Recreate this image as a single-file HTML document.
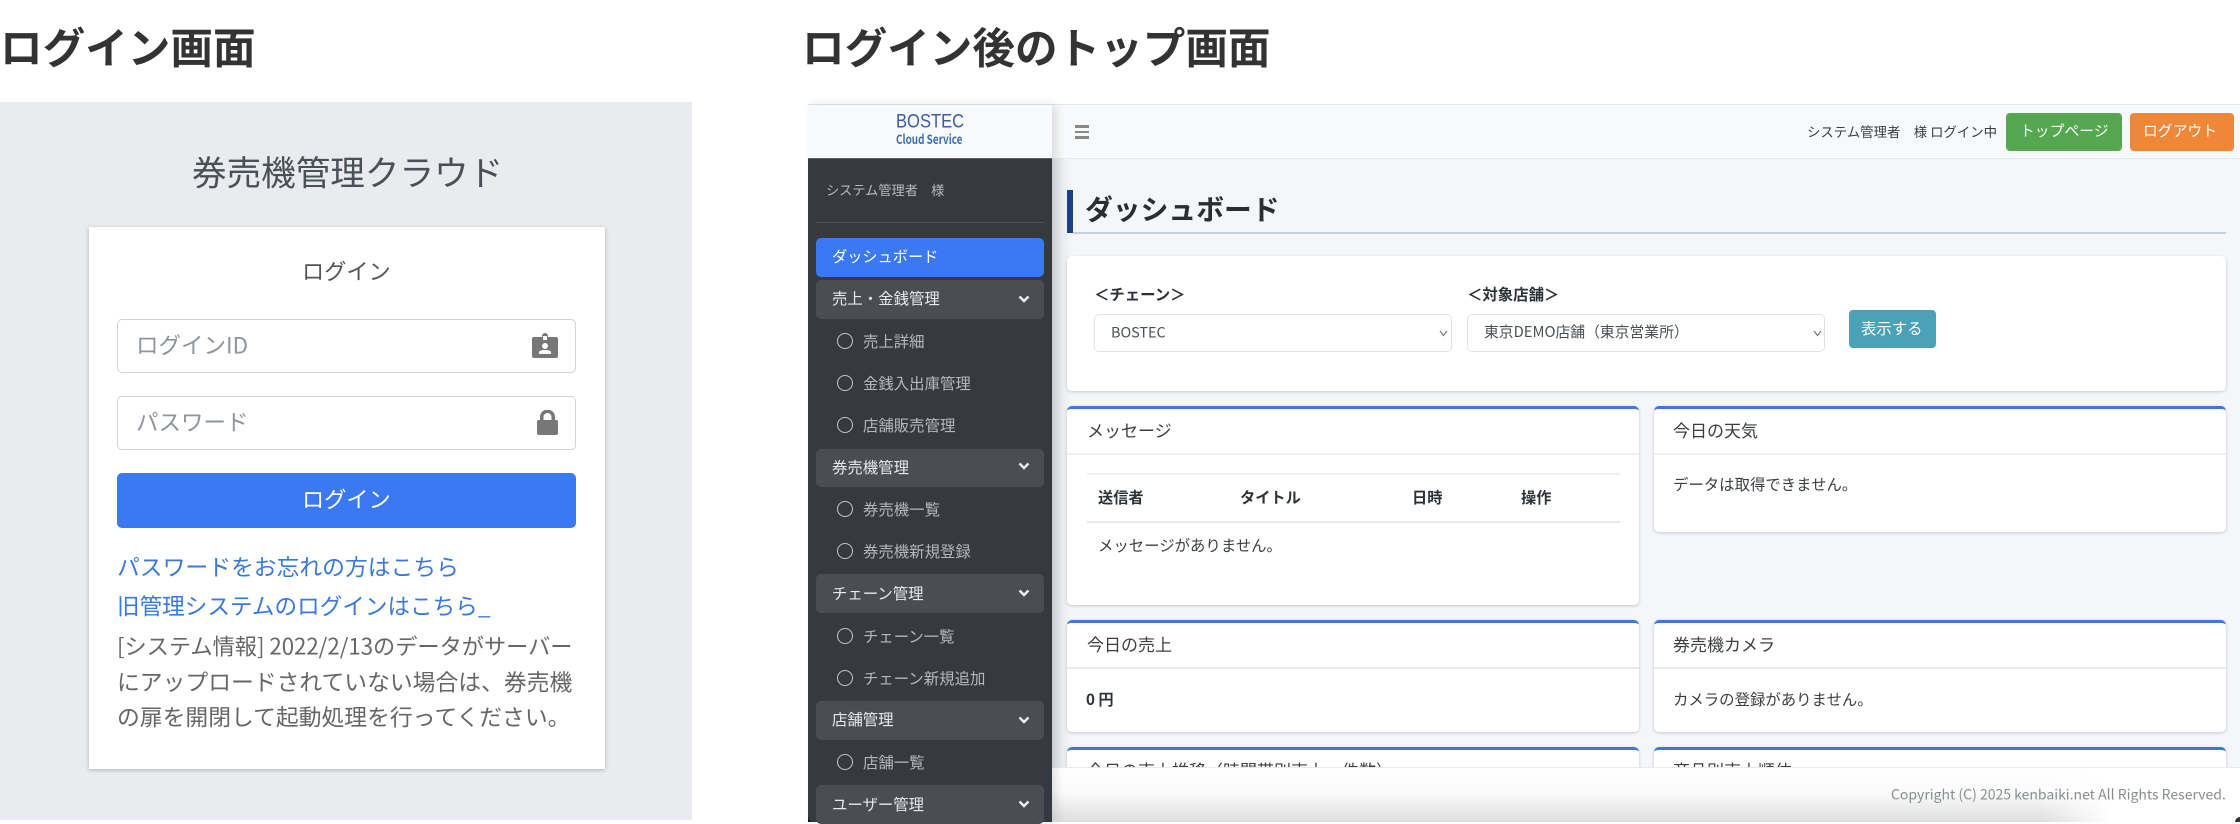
<!DOCTYPE html>
<html lang="ja">
<head>
<meta charset="utf-8">
<title>ログイン画面</title>
<style>
html,body{margin:0;padding:0;background:#fff;}
body{position:relative;width:2240px;height:822px;overflow:hidden;font-family:"Liberation Sans","Noto Sans CJK JP",sans-serif;}
.t{position:absolute;white-space:nowrap;transform:translateY(-50%);margin-top:-1px;line-height:1.2;font-family:"Noto Sans CJK JP",sans-serif;}
.b{position:absolute;box-sizing:border-box;}
.grp{position:absolute;left:816px;width:228px;height:39px;background:#4a4e54;border-radius:5px;}
.grpt{color:#e6e8ea;font-size:15.4px;left:832px;}
.sub{color:#b4b8bc;font-size:15.4px;left:863px;}
.c{position:absolute;left:837px;width:16px;height:16px;margin-top:-1px;box-sizing:border-box;border:1.6px solid #c4c7ca;border-radius:50%;transform:translateY(-50%);}
.chev{position:absolute;left:1018px;width:12px;height:8px;}
.card{position:absolute;background:#fff;border-radius:5px;box-shadow:0 1px 3px rgba(0,0,0,.2);box-sizing:border-box;border-top:3px solid #3f78dc;}
.ln{position:absolute;height:2px;background:#efefef;}
.dk{color:#3c3f42;font-size:15.4px;}
.hd{color:#3c3f42;font-size:17px;}
.th{color:#2e3236;font-size:15.2px;font-weight:700;}
</style>
</head>
<body>
<!-- Section titles -->
<div class="t" style="left:0;top:47px;font-size:42.6px;font-weight:700;color:#333;">ログイン画面</div>
<div class="t" style="left:802px;top:47px;font-size:42.6px;font-weight:700;color:#333;">ログイン後のトップ画面</div>

<!-- Login -->
<div class="b" style="left:0;top:102px;width:692px;height:718px;background:#e9ebef;"></div>
<div class="t" style="left:192px;top:172px;font-size:34.6px;color:#495057;">券売機管理クラウド</div>
<div class="b" style="left:89px;top:227px;width:516px;height:542px;background:#fff;box-shadow:0 1px 4px rgba(0,0,0,.25);"></div>
<div class="t" style="left:302px;top:272px;font-size:22.2px;color:#555;">ログイン</div>

<div class="b" style="left:117px;top:319px;width:459px;height:54px;background:#fff;border:1.5px solid #ced4da;border-radius:5px;"></div>
<div class="t" style="left:136px;top:346px;font-size:22.5px;color:#8f959b;">ログインID</div>
<svg style="position:absolute;left:532px;top:333px" width="26" height="25" viewBox="0 0 26 25"><path fill="#777" fill-rule="evenodd" d="M2 4h8V3a3 3 0 0 1 6 0v1h8a2 2 0 0 1 2 2v17a2 2 0 0 1-2 2H2a2 2 0 0 1-2-2V6a2 2 0 0 1 2-2zM11 3v4h4V3zM13 10a3 3 0 1 0 0 6 3 3 0 0 0 0-6zM7 21h12v-1.500c0-1.500-2-2.500-6-2.500s-6 1-6 2.500z"/></svg>

<div class="b" style="left:117px;top:396px;width:459px;height:54px;background:#fff;border:1.5px solid #ced4da;border-radius:5px;"></div>
<div class="t" style="left:136px;top:423px;font-size:22.5px;color:#8f959b;">パスワード</div>
<svg style="position:absolute;left:537px;top:410px" width="21" height="25" viewBox="0 0 21 25"><path fill="#777" d="M3 10V7a7.500 7.500 0 0 1 15 0v3h1a2 2 0 0 1 2 2v11a2 2 0 0 1-2 2H2a2 2 0 0 1-2-2V12a2 2 0 0 1 2-2zm3.500 0h8V7a4 4 0 0 0-8 0z"/></svg>

<div class="b" style="left:117px;top:473px;width:459px;height:55px;background:#3b79f3;border-radius:5px;"></div>
<div class="t" style="left:302px;top:500px;font-size:22.2px;color:#fff;">ログイン</div>

<div class="t" style="left:117px;top:567px;font-size:22.8px;color:#3a78dc;">パスワードをお忘れの方はこちら</div>
<div class="t" style="left:117px;top:606px;font-size:22.6px;color:#3a78dc;">旧管理システムのログインはこちら_</div>
<div class="t" style="left:117px;top:647px;font-size:22.2px;color:#666;">[システム情報] 2022/2/13のデータがサーバー</div>
<div class="t" style="left:117px;top:682px;font-size:22.8px;color:#666;">にアップロードされていない場合は、券売機</div>
<div class="t" style="left:117px;top:717px;font-size:22.8px;color:#666;">の扉を開閉して起動処理を行ってください。</div>

<!-- App screenshot -->
<div class="b" style="left:808px;top:104px;width:1432px;height:718px;background:#f4f6f9;border-top:1.5px solid #e3e4e6;"></div>

<!-- Content -->
<div class="b" style="left:1052px;top:105px;width:20px;height:662px;background:linear-gradient(90deg,#dfe1e4,#f4f6f9);"></div>
<div class="b" style="left:1052px;top:105px;width:1188px;height:54px;background:#f8f9fa;border-bottom:1.5px solid #e6e8ea;"></div>
<div class="b" style="left:1075px;top:125px;width:14px;height:2.5px;background:#888;"></div>
<div class="b" style="left:1075px;top:130.5px;width:14px;height:2.5px;background:#888;"></div>
<div class="b" style="left:1075px;top:136px;width:14px;height:2.5px;background:#888;"></div>
<div class="t" style="left:1807px;top:132px;font-size:13.4px;color:#3a3d40;">システム管理者　様 ログイン中</div>
<div class="b" style="left:2006px;top:113px;width:116px;height:38px;background:#55a84f;border-radius:4px;"></div>
<div class="t" style="left:2020px;top:132px;font-size:14.8px;color:#fff;">トップページ</div>
<div class="b" style="left:2130px;top:113px;width:104px;height:38px;background:#ee8737;border-radius:4px;"></div>
<div class="t" style="left:2143px;top:132px;font-size:14.8px;color:#fff;">ログアウト</div>

<div class="b" style="left:1067px;top:190px;width:6px;height:43px;background:#1b4285;"></div>
<div class="b" style="left:1073px;top:232px;width:1153px;height:2px;background:#c6cfdf;"></div>
<div class="t" style="left:1085px;top:210px;font-size:27.8px;font-weight:700;color:#2b2e31;">ダッシュボード</div>

<div class="b" style="left:1067px;top:256px;width:1159px;height:135px;background:#fff;border-radius:5px;box-shadow:0 1px 3px rgba(0,0,0,.18);"></div>
<div class="t th" style="left:1094px;top:295px;font-size:15.4px;">＜チェーン＞</div>
<div class="b" style="left:1094px;top:314px;width:358px;height:38px;background:#fff;border:1.5px solid #dfe2e6;border-radius:5px;"></div>
<div class="t" style="left:1111px;top:333px;font-size:14.4px;color:#4a4f54;">BOSTEC</div>
<svg style="position:absolute;left:1439px;top:330px" width="9" height="7" viewBox="0 0 9 7"><path fill="none" stroke="#777" stroke-width="1.200" d="M1 1l3.500 4.500L8 1"/></svg>
<div class="t th" style="left:1467px;top:295px;font-size:15.4px;">＜対象店舗＞</div>
<div class="b" style="left:1467px;top:314px;width:358px;height:38px;background:#fff;border:1.5px solid #dfe2e6;border-radius:5px;"></div>
<div class="t" style="left:1484px;top:333px;font-size:14.8px;color:#4a4f54;">東京DEMO店舗（東京営業所）</div>
<svg style="position:absolute;left:1813px;top:330px" width="9" height="7" viewBox="0 0 9 7"><path fill="none" stroke="#777" stroke-width="1.200" d="M1 1l3.500 4.500L8 1"/></svg>
<div class="b" style="left:1849px;top:310px;width:87px;height:38px;background:#4ba1b8;border-radius:4px;"></div>
<div class="t" style="left:1861px;top:329px;font-size:15.4px;color:#fff;">表示する</div>

<!-- Message card -->
<div class="card" style="left:1067px;top:406px;width:572px;height:199px;"></div>
<div class="t hd" style="left:1087px;top:431px;">メッセージ</div>
<div class="ln" style="left:1067px;top:453px;width:572px;"></div>
<div class="ln" style="left:1087px;top:473px;width:533px;"></div>
<div class="t th" style="left:1098px;top:498px;">送信者</div>
<div class="t th" style="left:1240px;top:498px;">タイトル</div>
<div class="t th" style="left:1412px;top:498px;">日時</div>
<div class="t th" style="left:1521px;top:498px;">操作</div>
<div class="ln" style="left:1087px;top:521px;width:533px;background:#e6e7e8;"></div>
<div class="t dk" style="left:1098px;top:546px;">メッセージがありません。</div>

<!-- Weather card -->
<div class="card" style="left:1654px;top:406px;width:572px;height:126px;"></div>
<div class="t hd" style="left:1673px;top:431px;">今日の天気</div>
<div class="ln" style="left:1654px;top:453px;width:572px;"></div>
<div class="t dk" style="left:1673px;top:485px;">データは取得できません。</div>

<!-- Sales / Camera -->
<div class="card" style="left:1067px;top:620px;width:572px;height:112px;"></div>
<div class="t hd" style="left:1087px;top:645px;">今日の売上</div>
<div class="ln" style="left:1067px;top:667px;width:572px;background:#e8e9ea;"></div>
<div class="t th" style="left:1086px;top:700px;font-size:15.2px;">0 円</div>
<div class="card" style="left:1654px;top:620px;width:572px;height:112px;"></div>
<div class="t hd" style="left:1673px;top:645px;">券売機カメラ</div>
<div class="ln" style="left:1654px;top:667px;width:572px;background:#e8e9ea;"></div>
<div class="t dk" style="left:1673px;top:700px;">カメラの登録がありません。</div>

<!-- Row 3 (clipped) -->
<div class="card" style="left:1067px;top:747px;width:572px;height:60px;"></div>
<div class="t hd" style="left:1087px;top:771px;">今日の売上推移（時間帯別売上・件数）</div>
<div class="card" style="left:1654px;top:747px;width:572px;height:60px;"></div>
<div class="t hd" style="left:1673px;top:771px;">商品別売上順位</div>

<!-- Footer -->
<div class="b" style="left:1052px;top:767px;width:1188px;height:55px;background:linear-gradient(180deg,#fff 0,#fbfbfb 45%,#dcddde 100%);border-top:1.5px solid #e8e9ea;"></div>
<div class="b" style="left:2040px;top:769px;width:200px;height:53px;background:linear-gradient(90deg,rgba(255,255,255,0),#fff 35%);"></div>
<div class="t" style="left:1891px;top:796px;font-size:14px;color:#8a8d90;">Copyright (C) 2025 kenbaiki.net All Rights Reserved.</div>
<div class="b" style="left:2235px;top:817px;width:5px;height:5px;background:#333;border-top-left-radius:5px;"></div>

<!-- Sidebar -->
<div class="b" style="left:808px;top:814px;width:8px;height:8px;background:#111;"></div>
<div class="b" style="left:808px;top:105px;width:244px;height:717px;background:#363a3f;border-bottom-left-radius:6px;box-shadow:4px 0 10px rgba(0,0,0,.12);"></div>
<div class="b" style="left:808px;top:105px;width:244px;height:54px;background:#f8f9fa;border-bottom:1px solid #5c6065;"></div>
<div class="t" style="left:896px;top:123px;font-size:19.5px;color:#3c5c9e;font-family:'Liberation Sans',sans-serif;transform-origin:0 50%;transform:translateY(-50%) scaleX(.85);">BOSTEC</div>
<div class="t" style="left:896px;top:140px;font-size:13px;font-weight:700;color:#3f70aa;transform-origin:0 50%;transform:translateY(-50%) scaleX(.76);">Cloud Service</div>
<div class="t" style="left:826px;top:191px;font-size:13.2px;color:#b6babd;">システム管理者　様</div>
<div class="b" style="left:816px;top:222px;width:228px;height:1px;background:#4f5358;"></div>

<div class="b" style="left:816px;top:238px;width:228px;height:39px;background:#3b79f3;border-radius:5px;"></div>
<div class="t" style="left:832px;top:257px;font-size:15.2px;color:#fff;">ダッシュボード</div>

<div class="grp" style="top:280px;"></div>
<div class="t grpt" style="top:299px;">売上・金銭管理</div>
<svg class="chev" style="top:295px" viewBox="0 0 12 8"><path fill="none" stroke="#eee" stroke-width="2.400" d="M1.500 1.500L6 6l4.500-4.500"/></svg>
<div class="c" style="top:342px;"></div><div class="t sub" style="top:342px;">売上詳細</div>
<div class="c" style="top:384px;"></div><div class="t sub" style="top:384px;">金銭入出庫管理</div>
<div class="c" style="top:426px;"></div><div class="t sub" style="top:426px;">店舗販売管理</div>

<div class="grp" style="top:449px;height:38px;"></div>
<div class="t grpt" style="top:468px;">券売機管理</div>
<svg class="chev" style="top:462px" viewBox="0 0 12 8"><path fill="none" stroke="#eee" stroke-width="2.400" d="M1.500 1.500L6 6l4.500-4.500"/></svg>
<div class="c" style="top:510px;"></div><div class="t sub" style="top:510px;">券売機一覧</div>
<div class="c" style="top:552px;"></div><div class="t sub" style="top:552px;">券売機新規登録</div>

<div class="grp" style="top:574px;"></div>
<div class="t grpt" style="top:594px;">チェーン管理</div>
<svg class="chev" style="top:589px" viewBox="0 0 12 8"><path fill="none" stroke="#eee" stroke-width="2.400" d="M1.500 1.500L6 6l4.500-4.500"/></svg>
<div class="c" style="top:637px;"></div><div class="t sub" style="top:637px;">チェーン一覧</div>
<div class="c" style="top:679px;"></div><div class="t sub" style="top:679px;">チェーン新規追加</div>

<div class="grp" style="top:701px;"></div>
<div class="t grpt" style="top:720px;">店舗管理</div>
<svg class="chev" style="top:716px" viewBox="0 0 12 8"><path fill="none" stroke="#eee" stroke-width="2.400" d="M1.500 1.500L6 6l4.500-4.500"/></svg>
<div class="c" style="top:763px;"></div><div class="t sub" style="top:763px;">店舗一覧</div>

<div class="grp" style="top:785px;"></div>
<div class="t grpt" style="top:805px;">ユーザー管理</div>
<svg class="chev" style="top:800px" viewBox="0 0 12 8"><path fill="none" stroke="#eee" stroke-width="2.400" d="M1.500 1.500L6 6l4.500-4.500"/></svg>
</body>
</html>
